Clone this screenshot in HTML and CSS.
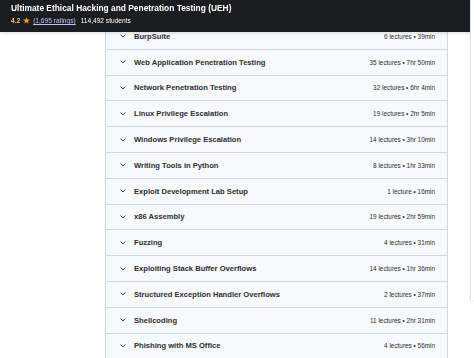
FILE: index.html
```html
<!DOCTYPE html>
<html lang="en">
<head>
  <meta charset="UTF-8" />
  <meta name="viewport" content="width=device-width, initial-scale=1.0"/>
  <title>Ultimate Ethical Hacking and Penetration Testing (UEH)</title>
  <link rel="stylesheet" href="styles.css">
</head>
<body>
  <!-- STICKY COURSE HEADER -->
  <div class="sticky-header">
    <div class="course-title">Ultimate Ethical Hacking and Penetration Testing (UEH)</div>
    <div class="course-meta">
      <span class="rating">4.2</span>
      <svg class="star" viewBox="0 0 10 10" width="7" height="7">
        <polygon points="5,0.4 6.3,3.6 9.7,3.8 7.1,6 7.9,9.4 5,7.5 2.1,9.4 2.9,6 0.3,3.8 3.7,3.6" fill="#f69c08"/>
      </svg>
      <a href="#" class="ratings-link">(1,695 ratings)</a>
      <span class="students">114,492 students</span>
    </div>
  </div>

  <div class="sidebar-card"></div>

  <!-- CURRICULUM -->
  <div class="curriculum">
    <div class="section-row">
      <svg class="chevron" viewBox="0 0 6 4" width="6" height="4"><polyline points="0.5,0.5 3,3 5.5,0.5"/></svg>
      <span class="section-title">BurpSuite</span>
      <span class="section-info">6 lectures • 39min</span>
    </div>
    <div class="section-row">
      <svg class="chevron" viewBox="0 0 6 4" width="6" height="4"><polyline points="0.5,0.5 3,3 5.5,0.5"/></svg>
      <span class="section-title">Web Application Penetration Testing</span>
      <span class="section-info">35 lectures • 7hr 50min</span>
    </div>
    <div class="section-row">
      <svg class="chevron" viewBox="0 0 6 4" width="6" height="4"><polyline points="0.5,0.5 3,3 5.5,0.5"/></svg>
      <span class="section-title">Network Penetration Testing</span>
      <span class="section-info">32 lectures • 6hr 4min</span>
    </div>
    <div class="section-row">
      <svg class="chevron" viewBox="0 0 6 4" width="6" height="4"><polyline points="0.5,0.5 3,3 5.5,0.5"/></svg>
      <span class="section-title">Linux Privilege Escalation</span>
      <span class="section-info">19 lectures • 2hr 5min</span>
    </div>
    <div class="section-row">
      <svg class="chevron" viewBox="0 0 6 4" width="6" height="4"><polyline points="0.5,0.5 3,3 5.5,0.5"/></svg>
      <span class="section-title">Windows Privilege Escalation</span>
      <span class="section-info">14 lectures • 3hr 10min</span>
    </div>
    <div class="section-row">
      <svg class="chevron" viewBox="0 0 6 4" width="6" height="4"><polyline points="0.5,0.5 3,3 5.5,0.5"/></svg>
      <span class="section-title">Writing Tools in Python</span>
      <span class="section-info">8 lectures • 1hr 33min</span>
    </div>
    <div class="section-row">
      <svg class="chevron" viewBox="0 0 6 4" width="6" height="4"><polyline points="0.5,0.5 3,3 5.5,0.5"/></svg>
      <span class="section-title">Exploit Development Lab Setup</span>
      <span class="section-info">1 lecture • 16min</span>
    </div>
    <div class="section-row">
      <svg class="chevron" viewBox="0 0 6 4" width="6" height="4"><polyline points="0.5,0.5 3,3 5.5,0.5"/></svg>
      <span class="section-title">x86 Assembly</span>
      <span class="section-info">19 lectures • 2hr 59min</span>
    </div>
    <div class="section-row">
      <svg class="chevron" viewBox="0 0 6 4" width="6" height="4"><polyline points="0.5,0.5 3,3 5.5,0.5"/></svg>
      <span class="section-title">Fuzzing</span>
      <span class="section-info">4 lectures • 31min</span>
    </div>
    <div class="section-row">
      <svg class="chevron" viewBox="0 0 6 4" width="6" height="4"><polyline points="0.5,0.5 3,3 5.5,0.5"/></svg>
      <span class="section-title">Exploiting Stack Buffer Overflows</span>
      <span class="section-info">14 lectures • 1hr 36min</span>
    </div>
    <div class="section-row">
      <svg class="chevron" viewBox="0 0 6 4" width="6" height="4"><polyline points="0.5,0.5 3,3 5.5,0.5"/></svg>
      <span class="section-title">Structured Exception Handler Overflows</span>
      <span class="section-info">2 lectures • 37min</span>
    </div>
    <div class="section-row">
      <svg class="chevron" viewBox="0 0 6 4" width="6" height="4"><polyline points="0.5,0.5 3,3 5.5,0.5"/></svg>
      <span class="section-title">Shellcoding</span>
      <span class="section-info">11 lectures • 2hr 31min</span>
    </div>
    <div class="section-row">
      <svg class="chevron" viewBox="0 0 6 4" width="6" height="4"><polyline points="0.5,0.5 3,3 5.5,0.5"/></svg>
      <span class="section-title">Phishing with MS Office</span>
      <span class="section-info">4 lectures • 56min</span>
    </div>
  </div>
</body>
</html>
```

FILE: styles.css
```css
body {
  margin: 0;
  background: #fff;
  font-family: "Liberation Sans", Arial, sans-serif;
  color: #2d2f31;
  overflow: hidden;
}

.sticky-header {
  position: fixed;
  top: 0;
  left: 0;
  right: 0;
  height: 32px;
  box-sizing: border-box;
  padding: 3px 11px 0;
  background: #1c1d1f;
  color: #fff;
  box-shadow: 0 1px 3px rgba(0,0,0,0.15);
  z-index: 2;
}

.course-title {
  font-size: 8.4px;
  font-weight: bold;
  line-height: 10px;
}

.course-meta {
  display: flex;
  align-items: center;
  gap: 2px;
  margin-top: 3px;
  font-size: 6.6px;
  line-height: 9px;
}

.rating {
  color: #f3ca8c;
  font-weight: bold;
}

.star {
  margin: 0 1px;
}

.ratings-link {
  color: #c0c4fc;
  text-decoration: underline;
  margin-right: 3px;
}

.sidebar-card {
  position: fixed;
  top: 0;
  left: 470px;
  width: 120px;
  height: 300px;
  background: #fff;
  border-left: 1px solid #e4e6e8;
  box-shadow: 0 1px 3px rgba(0,0,0,0.08);
  z-index: 3;
}

.curriculum {
  margin: 24px 0 0 105px;
  width: 343px;
}

.section-row {
  display: flex;
  align-items: center;
  height: 25.8px;
  box-sizing: border-box;
  padding: 0 12px 0 14px;
  background: #f7f9fa;
  border: 1px solid #d1d7dc;
  border-top: none;
}

.chevron {
  flex: none;
  fill: none;
  stroke: #2d2f31;
  stroke-width: 0.9;
  margin-right: 8px;
}

.section-title {
  flex: 1;
  font-size: 7.6px;
  font-weight: bold;
}

.section-info {
  font-size: 6.4px;
}
```
